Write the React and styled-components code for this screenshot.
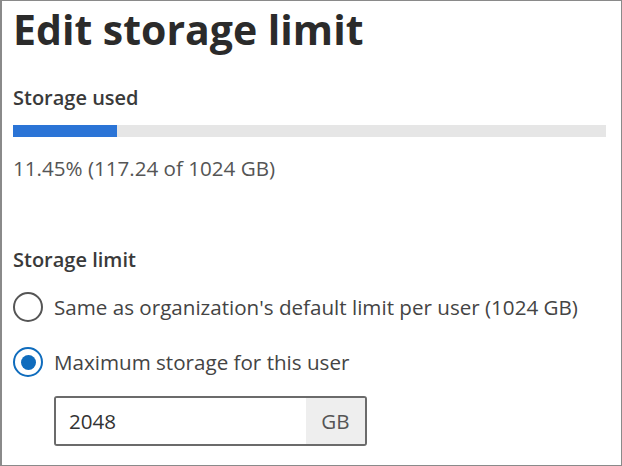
import React from 'react';
import styled, { createGlobalStyle } from 'styled-components';

const GlobalStyle = createGlobalStyle`
  html, body {
    margin: 0;
    padding: 0;
    background: #ffffff;
  }
  * {
    box-sizing: border-box;
  }
`;

const Panel = styled.div`
  width: 622px;
  height: 466px;
  border: 1px solid #8a8a8a;
  border-left-width: 2px;
  padding: 0 15px 0 11px;
  overflow: hidden;
  font-family: 'Open Sans', 'Noto Sans', sans-serif;
  color: #323130;
`;

const Title = styled.h1`
  margin: 0;
  font-size: 41px;
  line-height: 56px;
  font-weight: 700;
  color: #2b2b2b;
`;

const Label = styled.div`
  font-size: 20px;
  line-height: 26px;
  font-weight: 600;
  color: #3a3a3a;
  margin-top: ${(props) => props.top || 0}px;
`;

const Track = styled.div`
  height: 12px;
  margin-top: 14px;
  background: #e6e6e6;
`;

const Fill = styled.div`
  height: 100%;
  background: #2b74d6;
`;

const Usage = styled.div`
  margin-top: 18px;
  font-size: 20.6px;
  line-height: 26px;
  color: #555555;
`;

const Options = styled.div`
  display: flex;
  flex-direction: column;
  gap: 25px;
  margin-top: 19px;
`;

const Option = styled.label`
  display: flex;
  align-items: center;
  gap: 11px;
  font-size: 20.6px;
  line-height: 30px;
  color: #444444;
`;

const Circle = styled.span`
  width: 30px;
  height: 30px;
  flex: none;
  border-radius: 50%;
  border: 2px solid ${(props) => (props.checked ? '#0f6cbd' : '#555555')};
  display: flex;
  align-items: center;
  justify-content: center;

  &::after {
    content: '';
    width: 15px;
    height: 15px;
    border-radius: 50%;
    background: ${(props) => (props.checked ? '#0f6cbd' : 'transparent')};
  }
`;

const Field = styled.div`
  display: flex;
  width: 313px;
  height: 50px;
  margin: 19px 0 0 41px;
  border: 2px solid #6b6b6b;
  border-radius: 3px;
  overflow: hidden;
`;

const Input = styled.input`
  flex: 1;
  min-width: 0;
  border: none;
  outline: none;
  padding: 0 13px;
  font-family: inherit;
  font-size: 20.6px;
  color: #333333;
  background: #ffffff;
`;

const Suffix = styled.div`
  width: 59px;
  display: flex;
  align-items: center;
  justify-content: center;
  background: #eeeeee;
  font-size: 20.6px;
  color: #555555;
`;

function App() {
  const [choice, setChoice] = React.useState('custom');
  const [limit, setLimit] = React.useState('2048');

  return (
    <Panel>
      <GlobalStyle />
      <Title>Edit storage limit</Title>
      <Label top={28}>Storage used</Label>
      <Track>
        <Fill style={{ width: '17.6%' }} />
      </Track>
      <Usage>11.45% (117.24 of 1024 GB)</Usage>
      <Label top={66}>Storage limit</Label>
      <Options>
        <Option onClick={() => setChoice('default')}>
          <Circle checked={choice === 'default'} />
          Same as organization's default limit per user (1024 GB)
        </Option>
        <Option onClick={() => setChoice('custom')}>
          <Circle checked={choice === 'custom'} />
          Maximum storage for this user
        </Option>
      </Options>
      <Field>
        <Input value={limit} onChange={(e) => setLimit(e.target.value)} />
        <Suffix>GB</Suffix>
      </Field>
    </Panel>
  );
}

export default App;
